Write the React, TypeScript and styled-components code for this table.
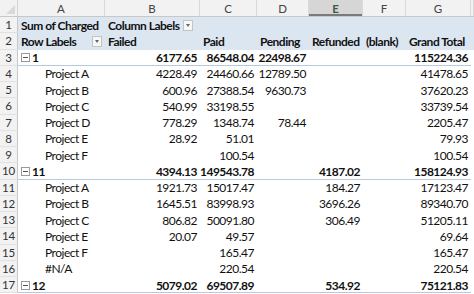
import React from 'react';
import styled, { createGlobalStyle, css } from 'styled-components';

const GlobalStyle = createGlobalStyle`
  html, body {
    margin: 0;
    padding: 0;
    background: #fff;
    overflow: hidden;
  }
`;

const COLS = '18px 87px 95px 57px 52px 54px 43px 65px 1fr';

const Sheet = styled.div`
  width: 474px;
  height: 294px;
  overflow: hidden;
  font-family: Lato, 'Liberation Sans', sans-serif;
  font-size: 12px;
  color: #111;
  background: #fff;
`;

const Row = styled.div<{ $band?: 'head' | 'sub' | 'item' }>`
  display: grid;
  grid-template-columns: ${COLS};
  height: 16.25px;
  background: ${(p) => (p.$band === 'head' ? '#dce6f1' : '#fff')};
`;

const HeadRow = styled.div`
  display: grid;
  grid-template-columns: ${COLS};
  height: 17px;
  background: #f2f2f2;
  border-bottom: 1px solid #c8c8c8;
  box-sizing: border-box;
`;

const Corner = styled.div`
  position: relative;
  border-right: 1px solid #d4d4d4;
  &::after {
    content: '';
    position: absolute;
    right: 2px;
    bottom: 2px;
    border-left: 9px solid transparent;
    border-bottom: 9px solid #d9d9d9;
  }
`;

const ColHead = styled.div<{ $selected?: boolean }>`
  display: flex;
  align-items: center;
  justify-content: center;
  color: #444;
  font-size: 11.5px;
  border-right: 1px solid #d9d9d9;
  ${(p) =>
    p.$selected &&
    css`
      background: #d6d6d6;
      color: #3d5a48;
      font-weight: 700;
      box-shadow: inset 0 -2px 0 #7a7a7a;
    `}
`;

const RowHead = styled.div`
  display: flex;
  align-items: center;
  justify-content: center;
  background: #f2f2f2;
  color: #333;
  font-size: 11.5px;
  letter-spacing: -0.2px;
  border-right: 1px solid #c8c8c8;
  border-bottom: 1px solid #e1e1e1;
  box-sizing: border-box;
`;

const Cell = styled.div<{ $right?: boolean; $bold?: boolean; $indent?: boolean; $line?: boolean }>`
  display: flex;
  align-items: center;
  justify-content: ${(p) => (p.$right ? 'flex-end' : 'flex-start')};
  padding: 0 ${(p) => (p.$right ? '3px' : '2px')} 0 ${(p) => (p.$indent ? '27px' : '3px')};
  font-weight: ${(p) => (p.$bold ? 700 : 400)};
  letter-spacing: -0.5px;
  white-space: nowrap;
  overflow: visible;
  gap: 3px;
  box-sizing: border-box;
  ${(p) => p.$line && 'box-shadow: inset 0 -1px 0 #b7c9df;'}
`;

const Spread = styled(Cell)`
  justify-content: space-between;
`;

const FilterButton = styled.span`
  display: inline-flex;
  align-items: center;
  justify-content: center;
  width: 8px;
  height: 9px;
  border: 1px solid #c4c4c4;
  background: #f7f7f7;
  margin-right: 1px;
  &::after {
    content: '';
    border-left: 2.5px solid transparent;
    border-right: 2.5px solid transparent;
    border-top: 3px solid #666;
  }
`;

const Toggle = styled.span`
  position: relative;
  display: inline-block;
  width: 7px;
  height: 7px;
  border: 1px solid #9a9a9a;
  margin-right: -1px;
  &::after {
    content: '';
    position: absolute;
    left: 1px;
    right: 1px;
    top: 3px;
    height: 1px;
    background: #555;
  }
`;

type Line = { label: string; group?: boolean; v: string[] };

const lines: Line[] = [
  { label: '1', group: true, v: ['6177.65', '86548.04', '22498.67', '', '', '115224.36'] },
  { label: 'Project A', v: ['4228.49', '24460.66', '12789.50', '', '', '41478.65'] },
  { label: 'Project B', v: ['600.96', '27388.54', '9630.73', '', '', '37620.23'] },
  { label: 'Project C', v: ['540.99', '33198.55', '', '', '', '33739.54'] },
  { label: 'Project D', v: ['778.29', '1348.74', '78.44', '', '', '2205.47'] },
  { label: 'Project E', v: ['28.92', '51.01', '', '', '', '79.93'] },
  { label: 'Project F', v: ['', '100.54', '', '', '', '100.54'] },
  { label: '11', group: true, v: ['4394.13', '149543.78', '', '4187.02', '', '158124.93'] },
  { label: 'Project A', v: ['1921.73', '15017.47', '', '184.27', '', '17123.47'] },
  { label: 'Project B', v: ['1645.51', '83998.93', '', '3696.26', '', '89340.70'] },
  { label: 'Project C', v: ['806.82', '50091.80', '', '306.49', '', '51205.11'] },
  { label: 'Project E', v: ['20.07', '49.57', '', '', '', '69.64'] },
  { label: 'Project F', v: ['', '165.47', '', '', '', '165.47'] },
  { label: '#N/A', v: ['', '220.54', '', '', '', '220.54'] },
  { label: '12', group: true, v: ['5079.02', '69507.89', '', '534.92', '', '75121.83'] },
];

// the last column (H) is only a sliver at the right edge, so its letter is out of view
const letters = ['A', 'B', 'C', 'D', 'E', 'F', 'G', ''];
const statuses = ['Failed', 'Paid', 'Pending', 'Refunded', '(blank)', 'Grand Total'];

export default function App() {
  return (
    <>
      <GlobalStyle />
      <Sheet>
        <HeadRow>
          <Corner />
          {letters.map((l, i) => (
            <ColHead key={i} $selected={l === 'E'}>
              {l}
            </ColHead>
          ))}
        </HeadRow>

        <Row $band="head">
          <RowHead>1</RowHead>
          <Cell $bold>Sum of Charged</Cell>
          <Cell $bold>
            Column Labels <FilterButton />
          </Cell>
        </Row>
        <Row $band="head">
          <RowHead>2</RowHead>
          <Spread $bold>
            Row Labels <FilterButton />
          </Spread>
          {statuses.map((s) => (
            <Cell key={s} $bold>
              {s}
            </Cell>
          ))}
        </Row>

        {lines.map((line, i) => (
          <Row key={i} $band={line.group ? 'sub' : 'item'}>
            <RowHead>{i + 3}</RowHead>
            <Cell $bold={line.group} $indent={!line.group} $line={line.group}>
              {line.group && <Toggle />}
              {line.label}
            </Cell>
            {line.v.map((val, j) => (
              <Cell key={j} $right $bold={line.group} $line={line.group}>
                {val}
              </Cell>
            ))}
            <Cell />
          </Row>
        ))}
      </Sheet>
    </>
  );
}
